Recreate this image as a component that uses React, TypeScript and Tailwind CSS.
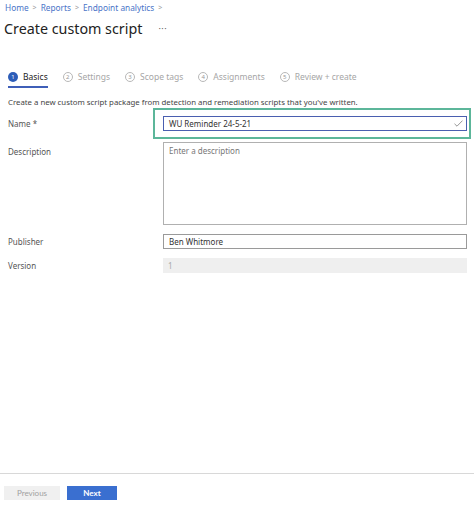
import React from 'react'

const steps = ['Basics', 'Settings', 'Scope tags', 'Assignments', 'Review + create']

const Check = () => (
  <svg width="9" height="7" viewBox="0 0 9 7" fill="none">
    <path d="M0.5 3.8L3 6.2L8.5 0.6" stroke="#8a8a8a" strokeWidth="0.9" />
  </svg>
)

const Row = ({ label, children, className }: { label: string; children: React.ReactNode; className?: string }) => (
  <div className={`flex ${className ?? ''}`}>
    <div className="w-[155px] shrink-0 text-[8px] text-[#555]">{label}</div>
    <div className="flex-1">{children}</div>
  </div>
)

export default function App() {
  return (
    <div className="w-[474px] h-[505px] bg-white flex flex-col font-['Noto_Sans',sans-serif] text-[#323130]">
      <div className="px-[5px] pt-[2px] flex items-center gap-[4px] text-[8.3px] text-[#4a74c8] leading-[12px]">
        <span>Home</span>
        <span className="text-[#a0a0a0] text-[7px]">&gt;</span>
        <span>Reports</span>
        <span className="text-[#a0a0a0] text-[7px]">&gt;</span>
        <span>Endpoint analytics</span>
        <span className="text-[#a0a0a0] text-[7px]">&gt;</span>
      </div>
      <div className="px-[4px] mt-[5px] flex items-center">
        <h1 className="text-[14.3px] leading-[20px] text-[#222]">Create custom script</h1>
        <span className="ml-[16px] text-[9px] text-[#666] tracking-[0.5px]">···</span>
      </div>

      <div className="flex items-center gap-[15px] px-[8px] mt-[32px] text-[8.5px] leading-[12px]">
        {steps.map((s, i) => (
          <div key={s} className="flex flex-col">
            <div className="flex items-center gap-[5px]">
              {i === 0 ? (
                <span className="w-[10px] h-[10px] rounded-full bg-[#2d5db8] text-white text-[6px] flex items-center justify-center">
                  1
                </span>
              ) : (
                <span className="w-[10px] h-[10px] rounded-full border border-[#b8b8b8] text-[#999] text-[6px] flex items-center justify-center">
                  {i + 1}
                </span>
              )}
              <span className={i === 0 ? 'text-[#222]' : 'text-[#a6a6a6]'}>{s}</span>
            </div>
            <div className={`h-[2px] mt-[3px] ${i === 0 ? 'bg-[#3f5fb8]' : 'bg-transparent'}`} />
          </div>
        ))}
      </div>

      <p className="px-[8px] mt-[9px] text-[7.8px] leading-[10px] text-[#444]">
        Create a new custom script package from detection and remediation scripts that you've written.
      </p>

      <div className="pl-[8px] pr-[7px] mt-[1px] flex flex-col">
        <Row label="Name *" className="items-center">
          <div className="-ml-[10px] -mr-[4px] border-2 border-[#5cb69a] pl-[8px] pr-[2px] py-[6px]">
            <div className="h-[15px] border border-[#4a5fb0] flex items-center justify-between pl-[5px] pr-[3px] text-[8px] text-[#333]">
              <span>WU Reminder 24-5-21</span>
              <Check />
            </div>
          </div>
        </Row>

        <Row label="Description" className="mt-[3px] pt-[4px]">
          <div className="-mt-[4px] h-[83px] border border-[#b0b0b0] px-[5px] pt-[2px] text-[8px] text-[#777]">
            Enter a description
          </div>
        </Row>

        <Row label="Publisher" className="mt-[9px] items-center">
          <div className="h-[15px] border border-[#9a9a9a] flex items-center pl-[5px] text-[8px] text-[#333]">
            Ben Whitmore
          </div>
        </Row>

        <Row label="Version" className="mt-[9px] items-center">
          <div className="h-[15px] bg-[#efefef] flex items-center pl-[5px] text-[8px] text-[#aaa]">1</div>
        </Row>
      </div>

      <div className="flex-1" />
      <div className="h-[1px] bg-[#d8d8d8]" />
      <div className="flex gap-[7px] px-[4px] mt-[12px] mb-[5px] text-[8px] font-['Lato',sans-serif]">
        <button className="w-[56px] h-[14px] bg-[#f0f0f0] text-[#a0a0a0] flex items-center justify-center">Previous</button>
        <button className="w-[50px] h-[14px] bg-[#3a6fd0] text-white font-bold flex items-center justify-center">Next</button>
      </div>
    </div>
  )
}
